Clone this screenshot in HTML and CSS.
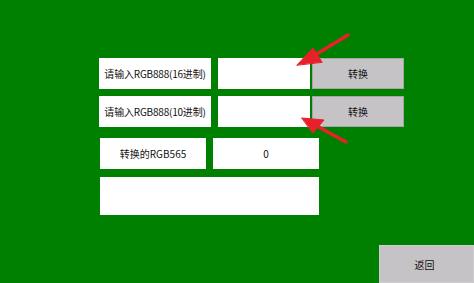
FILE: index.html
```html
<!DOCTYPE html>
<html lang="zh">
<head>
<meta charset="utf-8">
<link rel="stylesheet" href="styles.css">
</head>
<body>
<div class="page">
  <div class="form">
    <div class="row row-in">
      <div class="box label">请输入RGB888(16进制)</div>
      <div class="box input"></div>
      <div class="btn">转换</div>
    </div>
    <div class="row row-in second">
      <div class="box label">请输入RGB888(10进制)</div>
      <div class="box input"></div>
      <div class="btn">转换</div>
    </div>
    <div class="row row-out">
      <div class="box">转换的RGB565</div>
      <div class="box">0</div>
    </div>
    <div class="box result"></div>
  </div>
  <div class="footer">
    <div class="btn back">返回</div>
  </div>
  <svg class="arrows" width="474" height="283" viewBox="0 0 474 283">
    <g fill="#e8202a" stroke="#e8202a" stroke-linecap="round">
      <line x1="348" y1="35" x2="310" y2="58" stroke-width="3.5"/>
      <polygon points="297,65 313,48 322,62" stroke-width="1"/>
      <line x1="346" y1="142" x2="315" y2="125" stroke-width="3.5"/>
      <polygon points="302,118 324,120 313,133" stroke-width="1"/>
    </g>
  </svg>
</div>
</body>
</html>
```
FILE: styles.css
```css
html, body {
  margin: 0;
  padding: 0;
}
body {
  background: #008000;
  font-family: "Noto Sans CJK SC", "Liberation Sans", sans-serif;
  font-size: 10px;
  color: #111;
}
.page {
  position: relative;
  width: 474px;
  height: 283px;
  overflow: hidden;
}
.form {
  padding: 58px 0 0 99px;
  display: flex;
  flex-direction: column;
}
.row {
  display: flex;
}
.row-in {
  height: 31px;
}
.row-in .label {
  width: 112px;
  margin-right: 7px;
  letter-spacing: -0.2px;
}
.row-in .input {
  width: 92px;
  margin-right: 2px;
}
.second {
  margin-top: 7px;
}
.row-out {
  margin-top: 11px;
  margin-left: 1px;
  height: 31px;
  gap: 7px;
}
.row-out .box {
  width: 106px;
}
.box {
  background: #fff;
  display: flex;
  align-items: center;
  justify-content: center;
  white-space: nowrap;
}
.btn {
  width: 92px;
  box-sizing: border-box;
  background: #c6c3c6;
  border: 1px solid #a9a6a9;
  display: flex;
  align-items: center;
  justify-content: center;
}
.result {
  margin-top: 8px;
  margin-left: 1px;
  width: 219px;
  height: 38px;
}
.footer {
  display: flex;
  justify-content: flex-end;
  margin-top: 30px;
}
.back {
  width: 95px;
  height: 38px;
  padding-right: 4px;
  border-color: #d0cdd0;
}
.arrows {
  position: absolute;
  left: 0;
  top: 0;
}
```
